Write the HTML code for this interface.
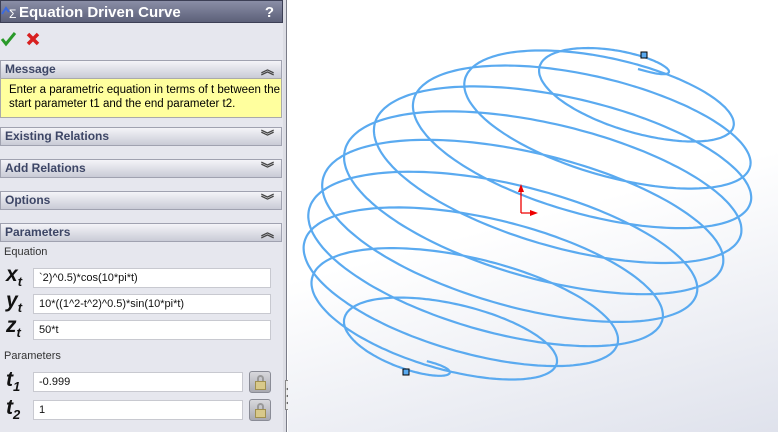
<!DOCTYPE html>
<html><head><style>
*{margin:0;padding:0;box-sizing:border-box}
body{width:778px;height:432px;overflow:hidden;font-family:"Liberation Sans",sans-serif;position:relative;background:#fff}
#panel{position:absolute;left:0;top:0;width:283px;height:432px;background:#e6e7ee}
#edge{position:absolute;left:283px;top:0;width:4px;height:432px;background:#dcdde4;border-right:1px solid #7a7c88}
#vp{position:absolute;left:288px;top:0;width:490px;height:432px;background:linear-gradient(165deg,#ffffff 0%,#ffffff 50%,#dfe2ec 100%)}
.title{position:absolute;left:0;top:0;width:283px;height:23px;background:linear-gradient(#8a8ea6,#5c6079);color:#fff;font-weight:bold;font-size:15px;line-height:23px;padding-left:18px;border:1px solid #3c3f55}
.title .q{position:absolute;right:8px;top:0}
.hdr{position:absolute;left:0;width:282px;height:19px;background:linear-gradient(#f4f4f8,#c9cbd6);border:1px solid #a0a2b0;color:#3d4666;font-weight:bold;font-size:12px;line-height:17px;padding-left:4px}
.hdr .c{position:absolute;right:7px;top:0;font-size:13px;color:#444;font-weight:bold}
.msg{position:absolute;left:0;top:78px;width:282px;height:40px;background:#ffff9e;border:1px solid #aaa;font-size:11.5px;line-height:14px;padding:4px 0 0 8px;color:#000}
.lbl{position:absolute;left:4px;font-size:11px;color:#333}
.inp{position:absolute;left:33px;height:20px;background:#fff;border:1px solid #c8c9d0;font-size:11px;line-height:18px;padding-left:5px;color:#111}
.v{position:absolute;left:6px;font-family:"Liberation Sans",sans-serif;font-style:italic;font-weight:bold;font-size:21px;color:#111}
.v sub{font-size:13px}
.lock{position:absolute;left:249px;width:22px;height:22px;border:1px solid #8a8c96;border-radius:3px;background:linear-gradient(#d8d8dc,#a8a9b0)}
.lock i{position:absolute;left:5px;top:9px;width:11px;height:9px;background:#d8c98a;border:1px solid #a09050}
.lock b{position:absolute;left:7px;top:3px;width:7px;height:8px;border:2px solid #999;border-bottom:none;border-radius:4px 4px 0 0}
</style></head><body>
<div id="panel">
<div class="title">Equation Driven Curve<span class="q">?</span></div>
<svg style="position:absolute;left:1px;top:2px" width="18" height="18"><path d="M1 12 L5 6 L8 10" stroke="#3a6ae0" stroke-width="2" fill="none"/><text x="8" y="16" font-size="12" fill="#fff" font-family="Liberation Sans">Σ</text></svg>
<svg style="position:absolute;left:0;top:30px" width="50" height="18"><path d="M2 9 L6 14 L15 3" stroke="#2a9a2a" stroke-width="3" fill="none"/><path d="M28 4 L38 14 M38 4 L28 14" stroke="#d82020" stroke-width="3.5"/></svg>
<div class="hdr" style="top:60px">Message<span class="c">︽</span></div>
<div class="msg">Enter a parametric equation in terms of t between the start parameter t1 and the end parameter t2.</div>
<div class="hdr" style="top:127px">Existing Relations<span class="c">︾</span></div>
<div class="hdr" style="top:159px">Add Relations<span class="c">︾</span></div>
<div class="hdr" style="top:191px">Options<span class="c">︾</span></div>
<div class="hdr" style="top:223px">Parameters<span class="c">︽</span></div>
<div class="lbl" style="top:246px">Equation</div>
<div class="v" style="top:263px">x<sub>t</sub></div><div class="inp" style="top:268px;width:238px">`2)^0.5)*cos(10*pi*t)</div>
<div class="v" style="top:289px">y<sub>t</sub></div><div class="inp" style="top:294px;width:238px">10*((1^2-t^2)^0.5)*sin(10*pi*t)</div>
<div class="v" style="top:314px">z<sub>t</sub></div><div class="inp" style="top:320px;width:238px">50*t</div>
<div class="lbl" style="top:350px">Parameters</div>
<div class="v" style="top:368px">t<sub>1</sub></div><div class="inp" style="top:372px;width:210px">-0.999</div>
<div class="lock" style="top:371px"><b></b><i></i></div>
<div class="v" style="top:396px">t<sub>2</sub></div><div class="inp" style="top:400px;width:210px">1</div>
<div class="lock" style="top:399px"><b></b><i></i></div>
</div>
<div id="edge"></div>
<svg style="position:absolute;left:285px;top:380px" width="8" height="30"><rect x="0.5" y="0.5" width="7" height="29" fill="#eee" stroke="#888"/><path d="M5 7 L2 9 L5 11 M5 14 L2 16 L5 18 M5 21 L2 23 L5 25" stroke="#555" fill="none"/></svg>
<div id="vp"></div>
<svg id="sp" style="position:absolute;left:0;top:0" width="778" height="432">
<path id="curve" d="" stroke="#5aaaf0" stroke-width="2.2" fill="none"/>
<path d="M521 213 L521 190 M521 213 L532 213" stroke="#e00" stroke-width="1.3"/>
<path d="M518 192 L521 184 L524 192Z M530 210 L538 213 L530 216Z" fill="#e00"/>
<rect x="641" y="52" width="6" height="6" fill="#5aaaf0" stroke="#000"/>
<rect x="403" y="369" width="6" height="6" fill="#5aaaf0" stroke="#000"/>
</svg>
<script>
var d="",N=2000;
for(var i=0;i<=N;i++){var t=-0.999+1.999*i/N;var r=10*Math.sqrt(Math.max(0,1-t*t));var th=10*Math.PI*t;var z=50*t;
var c=Math.cos(th),s=Math.sin(th);
var x=528+2.2*z+r*(19.5*c-1.5*s);var y=214-2.9*z+r*(5.0*c+6.8*s);
d+=(i?"L":"M")+x.toFixed(1)+" "+y.toFixed(1);}
document.getElementById("curve").setAttribute("d",d);
</script>
</body></html>
